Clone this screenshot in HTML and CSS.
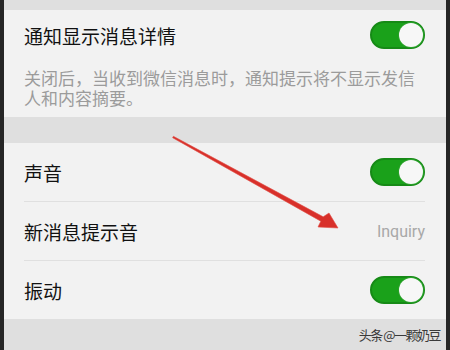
FILE: index.html
```html
<!DOCTYPE html>
<html lang="zh-CN">
<head>
    <meta charset="UTF-8">
    <meta name="viewport" content="width=device-width, initial-scale=1.0">
    <title>新消息通知</title>
    <link rel="stylesheet" href="styles.css">
</head>
<body>
    <div class="screen">
        <div class="band band-top"></div>

        <div class="section">
            <div class="row row-first">
                <span class="label">通知显示消息详情</span>
                <span class="switch on"></span>
            </div>
            <p class="hint">关闭后，当收到微信消息时，通知提示将不显示发信人和内容摘要。</p>
        </div>

        <div class="band band-mid"></div>

        <div class="section">
            <div class="row">
                <span class="label">声音</span>
                <span class="switch on"></span>
            </div>
            <div class="row">
                <span class="label">新消息提示音</span>
                <span class="value">Inquiry</span>
            </div>
            <div class="row row-last">
                <span class="label">振动</span>
                <span class="switch on"></span>
            </div>
        </div>

        <div class="band band-bottom">
            <span class="watermark">头条 @一颗奶豆</span>
        </div>
    </div>

    <svg class="arrow" width="450" height="350" viewBox="0 0 450 350">
        <polygon points="173.4,136.3 323.2,216.8 329,213 338,228 318,227 320.8,221.2 172.6,137.7" />
    </svg>
</body>
</html>
```

FILE: styles.css
```css
body {
    margin: 0;
    width: 450px;
    height: 350px;
    overflow: hidden;
    background-color: #262626;
    font-family: "Noto Sans CJK SC", "Noto Sans", sans-serif;
    position: relative;
}
.screen {
    margin: 0 4px;
    height: 350px;
    display: flex;
    flex-direction: column;
    background-color: #f2f2f2;
}
.band {
    background-color: #dfdfdf;
}
.band-top {
    height: 10px;
}
.band-mid {
    height: 26px;
}
.band-bottom {
    flex: 1;
    display: flex;
    justify-content: flex-end;
    align-items: center;
    padding-right: 6px;
}
.section {
    padding: 0 21px 0 20px;
}
.row {
    height: 59px;
    display: flex;
    align-items: center;
    justify-content: space-between;
    border-bottom: 1px solid #e0e0e0;
    box-sizing: border-box;
}
.row-first {
    height: 50px;
    border-bottom: none;
}
.row-last {
    height: 58px;
    border-bottom: none;
}
.label {
    font-size: 19px;
    color: #111;
}
.hint {
    margin: 0;
    padding: 8px 0 9px;
    font-size: 17px;
    line-height: 20px;
    color: #9b9b9b;
}
.value {
    font-family: Roboto, "Noto Sans", sans-serif;
    font-size: 16px;
    color: #a8a8a8;
}
.switch {
    width: 55px;
    height: 28px;
    border-radius: 14px;
    box-sizing: border-box;
    position: relative;
    background-color: #e4e4e4;
}
.switch.on {
    background-color: #1aa11a;
    border: 2px solid #168a16;
}
.switch.on::after {
    content: "";
    position: absolute;
    right: 0;
    top: 0;
    width: 24px;
    height: 24px;
    border-radius: 50%;
    background-color: #f7f7f7;
    box-shadow: 0 0 0 1px #2aa12a;
}
.watermark {
    font-size: 13px;
    color: #3a3a3a;
    letter-spacing: -1.5px;
}
.arrow {
    position: absolute;
    left: 0;
    top: 0;
    pointer-events: none;
}
.arrow polygon {
    fill: #d8302a;
    stroke: #e05048;
    stroke-width: 0.6;
    stroke-linejoin: round;
}
```
